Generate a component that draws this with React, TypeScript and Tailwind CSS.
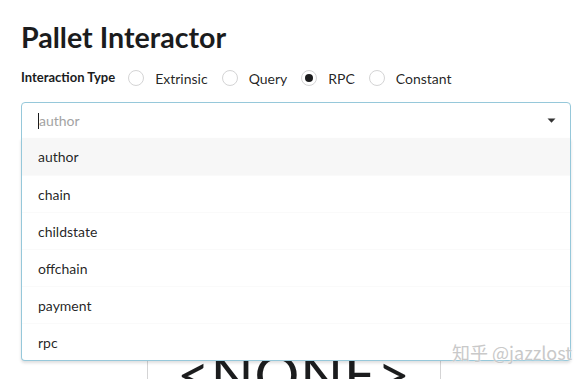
import { useState } from "react";

const types = ["Extrinsic", "Query", "RPC", "Constant"];
const sections = ["author", "chain", "childstate", "offchain", "payment", "rpc"];

const Radio = ({ label, checked }: { label: string; checked: boolean }) => (
  <label className="flex items-center gap-[11px] cursor-pointer">
    <span className="w-[16px] h-[16px] rounded-full border border-[#d4d4d5] bg-white flex items-center justify-center">
      {checked && <span className="w-[8px] h-[8px] rounded-full bg-[#1b1c1d]" />}
    </span>
    <span className="text-[14px] text-[rgba(0,0,0,0.87)]">{label}</span>
  </label>
);

export default function App() {
  const [selected] = useState("author");

  return (
    <div className="font-['Lato','Liberation_Sans',sans-serif] text-[#212121] bg-white min-h-[379px] overflow-hidden px-[21px] pt-[19px]">
      <h1 className="text-[28.6px] font-bold leading-[36px] text-[#1b1c1d]">Pallet Interactor</h1>

      <div className="flex items-center gap-[13px] mt-[10px] h-[26px]">
        <span className="text-[13px] font-bold text-[#1b1c1d]">Interaction Type</span>
        <div className="flex items-center gap-[14px]">
          {types.map((t) => (
            <Radio key={t} label={t} checked={t === "RPC"} />
          ))}
        </div>
      </div>

      <div className="relative mt-[11px] w-[550px]">
        <div className="h-[37px] border border-[#96c8da] rounded-t-[4px] flex items-center pl-[16px] pr-[14px] bg-white">
          <span className="w-px h-[16px] bg-[#1b1c1d]" />
          <span className="text-[14px] text-[#a3a3a3]">author</span>
          <svg className="ml-auto" width="9" height="5" viewBox="0 0 9 5">
            <path d="M0.5 0.5h8L4.5 4.8z" fill="#333" />
          </svg>
        </div>
        <div className="absolute left-0 right-0 top-[36px] z-10 bg-white border border-t-0 border-[#96c8da] rounded-b-[4px] shadow-[0_2px_3px_0_rgba(34,36,38,0.15)]">
          {sections.map((s, i) => (
            <div
              key={s}
              className={`h-[37px] flex items-center px-[16px] text-[14px] text-[rgba(0,0,0,0.87)] ${
                i > 0 ? "border-t border-[#fafafa]" : ""
              } ${s === selected ? "bg-[#f7f7f7]" : ""}`}
            >
              {s}
            </div>
          ))}
        </div>
      </div>

      <div className="mt-[186px] ml-[126px] w-[294px] border border-[#d4d4d5] flex justify-center pt-[20px] h-[120px]">
        <span className="text-[56px] leading-none text-[#1b1c1d] tracking-[1px]">&lt;NONE&gt;</span>
      </div>

      <div className="absolute left-[452px] top-[339px] z-20 text-[18px] text-[#c9c9c9] font-['Noto_Sans_CJK_SC',sans-serif] [text-shadow:0_0_2px_#fff]">
        知乎 @jazzlost
      </div>
    </div>
  );
}
